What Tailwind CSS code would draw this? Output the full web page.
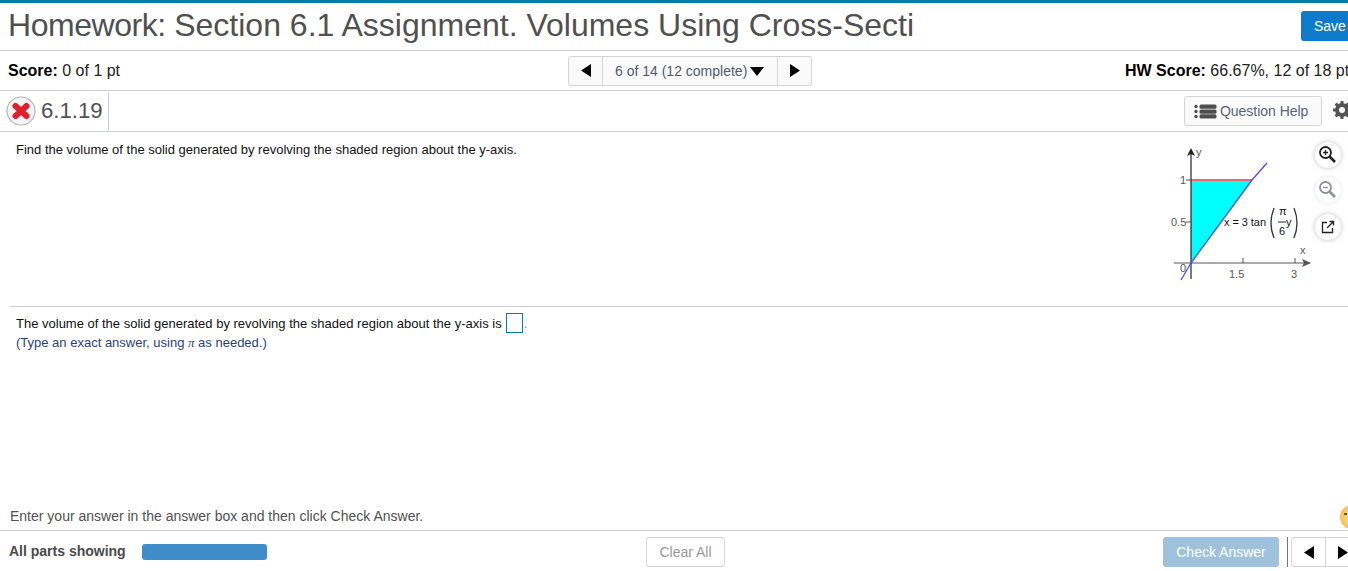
<!DOCTYPE html>
<html><head>
<meta charset="utf-8">
<script src="https://cdn.jsdelivr.net/npm/@tailwindcss/browser@4"></script>
<title>Homework</title>
</head>
<body class="bg-white overflow-hidden font-['Liberation_Sans',Arial,sans-serif]">
<div class="w-[1348px] h-[571px] overflow-hidden flex flex-col">
  <!-- title -->
  <div class="h-[51px] shrink-0 border-t-[3px] border-t-[#007fa3] border-b border-b-[#c8cfdf] flex items-start justify-between pl-2">
    <h1 class="text-[32px] leading-[44px] text-[#505050] whitespace-nowrap"><span class="tracking-[-0.45px]">Homework: </span>Section 6.1 Assignment. Volumes Using Cross-Secti</h1>
    <div class="w-[47px] h-[30px] mt-[8px] bg-[#0e7acb] rounded-l-[3px] text-white text-sm flex items-center pl-[13px] overflow-hidden">Save</div>
  </div>
  <!-- score row -->
  <div class="h-[40px] shrink-0 border-b border-b-[#c8cfdf] flex items-center pl-2 relative text-[14px] text-[#222]">
    <div class="w-[560px] shrink-0 text-[16px] whitespace-nowrap"><b class="text-black">Score:</b> 0 of 1 pt</div>
    <div class="w-[244px] h-[30px] shrink-0 flex items-center border border-[#d4d4d4] rounded-[3px] bg-[#fafafa] text-[#505a6e]">
      <div class="w-[34px] h-full flex items-center justify-center border-r border-[#d4d4d4]">
        <svg width="10" height="13" viewBox="0 0 10 13"><path d="M10 0V13L0 6.500Z" fill="#000"/></svg>
      </div>
      <div class="flex-1 h-full flex items-center pl-3 pt-[1px] whitespace-nowrap">6 of 14 (12 complete)<svg class="ml-[3px]" width="14" height="9" viewBox="0 0 14 9"><path d="M0 0H14L7 9Z" fill="#000"/></svg></div>
      <div class="w-[34px] h-full flex items-center justify-center border-l border-[#d4d4d4]">
        <svg width="10" height="13" viewBox="0 0 10 13"><path d="M0 0V13L10 6.500Z" fill="#000"/></svg>
      </div>
    </div>
    <div class="ml-[313px] shrink-0 text-[16px] whitespace-nowrap"><b class="text-black">HW Score:</b> 66.67%, 12 of 18 pts</div>
  </div>
  <!-- question number row -->
  <div class="h-[41px] shrink-0 border-b border-b-[#c8cfdf] flex items-center text-[#505050]">
    <div class="h-[39px] w-[109px] border-r border-[#c8cfdf] flex items-center pl-[6px] gap-[5px]">
      <svg width="30" height="30" viewBox="0 0 30 30">
        <circle cx="15" cy="15" r="14" fill="#f4f4f4" stroke="#b5b5b5" stroke-width="1.200"/>
        <path d="M9.500 10L20.500 20M20.500 10L9.500 20" stroke="#e0202c" stroke-width="6" stroke-linecap="round"/>
      </svg>
      <span class="text-[22.2px]">6.1.19</span>
    </div>
    <div class="ml-auto w-[138px] h-[30px] mr-[26px] border border-[#d4d4d4] rounded-[3px] bg-[#fafafa] flex items-center pl-[9px] gap-[3px] text-[14px] tracking-[-0.03px] text-[#5a6478] whitespace-nowrap">
      <svg width="23" height="15" viewBox="0 0 23 15" fill="#4d4d4d">
        <circle cx="2" cy="2.500" r="1.700"/><circle cx="2" cy="7.500" r="1.700"/><circle cx="2" cy="12.500" r="1.700"/>
        <rect x="5.500" y="0.500" width="17" height="4.300" rx="1.500"/><rect x="5.500" y="5.400" width="17" height="4.300" rx="1.500"/><rect x="5.500" y="10.300" width="17" height="4.300" rx="1.500"/>
      </svg>
      Question Help
    </div>
    <svg class="absolute left-[1333px] top-[101px]" width="18" height="18" viewBox="0 0 18 18">
      <circle cx="9" cy="9" r="5" fill="none" stroke="#555" stroke-width="4"/>
      <path d="M9 0V4M9 14V18M0 9H4M14 9H18M2.600 2.600L5.400 5.400M12.600 12.600L15.400 15.400M2.600 15.400L5.400 12.600M12.600 5.400L15.400 2.600" stroke="#555" stroke-width="3"/>
    </svg>
  </div>
  <!-- question -->
  <div class="h-[175px] shrink-0 ml-[10px] border-b border-b-[#c8cfdf] flex text-[13px] text-[#111]">
    <p class="ml-[6px] mt-[10px] w-[1140px] shrink-0 leading-[15px]">Find the volume of the solid generated by revolving the shaded region about the y-axis.</p>
    <svg class="mt-[10px] shrink-0 ml-[9px]" width="150" height="142" viewBox="1165 141 150 142">
      <path d="M1191 179H1252L1191 262Z" fill="#00ffff"/>
      <path d="M1191 179H1252" stroke="#f0666a" stroke-width="2"/>
      <path d="M1174 262H1310" stroke="#555" stroke-width="1.200"/>
      <path d="M1302 258L1311 262L1302 266L1304 262Z" fill="#555"/>
      <path d="M1191 278V150" stroke="#222" stroke-width="1.200"/>
      <path d="M1187 155L1191 147L1195 155L1191 153Z" fill="#222"/>
      <path d="M1186 179H1191M1186 221H1191M1243 257V262M1295 257V262" stroke="#555"/>
      <path d="M1181 279L1191 262L1252 179L1267 162" stroke="#4a4af0" stroke-width="1.300" fill="none"/>
      <g font-family="Liberation Sans" font-size="11" fill="#555">
        <text x="1196" y="155">y</text>
        <text x="1180" y="183">1</text>
        <text x="1171" y="225">0.5</text>
        <text x="1180" y="271">0</text>
        <text x="1229" y="277">1.5</text>
        <text x="1291" y="277">3</text>
        <text x="1300" y="253">x</text>
      </g>
      <g font-family="Liberation Sans" font-size="11" fill="#111">
        <text x="1224" y="225" font-weight="500" textLength="42">x = 3 tan</text>
        <text x="1279" y="214">π</text>
        <text x="1279" y="234">6</text>
        <text x="1286" y="225">y</text>
      </g>
      <path d="M1278 221H1286" stroke="#111" stroke-width="0.900"/>
      <path d="M1274 207Q1268 222 1274 237M1294 207Q1300 222 1294 237" stroke="#333" stroke-width="1.300" fill="none"/>
    </svg>
    <div class="mt-[10px] flex flex-col items-center gap-[9px] shrink-0 w-[26px]">
      <div class="w-[26px] h-[26px] rounded-full bg-white shadow-[0_0_5px_rgba(0,0,0,0.25)] flex items-center justify-center">
        <svg width="20" height="20" viewBox="0 0 20 20" fill="none" stroke="#222"><circle cx="7.500" cy="7.500" r="5.500" stroke-width="1.800"/><path d="M11.500 11.500L17 17" stroke-width="2.700"/><path d="M5 7.500H10M7.500 5V10" stroke-width="1.300"/></svg>
      </div>
      <div class="w-[26px] h-[26px] rounded-full bg-white shadow-[0_0_4px_rgba(0,0,0,0.12)] flex items-center justify-center">
        <svg width="20" height="20" viewBox="0 0 20 20" fill="none" stroke="#8a9299"><circle cx="7.500" cy="7.500" r="5.500" stroke-width="1.800"/><path d="M11.500 11.500L17 17" stroke-width="2.700"/><path d="M5 7.500H10" stroke-width="1.300"/></svg>
      </div>
      <div class="w-[26px] h-[26px] mt-[2px] rounded-full bg-white shadow-[0_0_5px_rgba(0,0,0,0.25)] flex items-center justify-center">
        <svg width="14" height="14" viewBox="0 0 14 14" fill="none" stroke="#222" stroke-width="1.300"><path d="M6 2.500H1.500V12.500H11.500V8"/><path d="M6 8L12.500 1.500M8.500 1.500H12.500V5.500"/></svg>
      </div>
    </div>
  </div>
  <!-- answer -->
  <div class="flex-1 relative px-4 pt-[6px] text-[13px] text-[#111] leading-[19px]">
    <div class="flex items-center whitespace-nowrap">The volume of the solid generated by revolving the shaded region about the y-axis is<span class="w-[17px] h-[20px] ml-[4px] mr-[1px] border border-[#007fa3] inline-block"></span><span class="text-[#888]">.</span></div>
    <div class="text-[#2a3f7a]">(Type an exact answer, using <span class="font-['Liberation_Serif',serif] italic">π</span> as needed.)</div>
  </div>
  <!-- instruction -->
  <div class="h-[31px] shrink-0 border-b border-b-[#c8cfdf] pl-[10px] pt-[7px] text-[14px] leading-[18px] text-[#505050] relative">
    Enter your answer in the answer box and then click Check Answer.
    <div class="absolute left-[1340px] top-[5px] w-[24px] h-[24px] rounded-full bg-radial from-[#fbe68a] to-[#eeb04a] flex items-center pl-[4px]"><span class="w-[3px] h-[2px] mb-[6px] bg-[#7a5a20]"></span></div>
  </div>
  <!-- footer -->
  <div class="h-[40px] shrink-0 flex items-center pl-[9px] text-[14px]">
    <b class="w-[133px] shrink-0 text-[#4a4a4a]">All parts showing</b>
    <div class="w-[125px] h-[16px] shrink-0 mt-[2px] rounded-[3px] bg-[#3f8ccb]"></div>
    <div class="ml-[379px] w-[79px] h-[30px] shrink-0 mt-[2px] border border-[#d4d4d4] rounded-[3px] text-[#999] flex items-center justify-center">Clear All</div>
    <div class="ml-[438px] w-[116px] h-[30px] shrink-0 mt-[2px] rounded-[3px] bg-[#9fc2dc] text-white flex items-center justify-center">Check Answer</div>
    <div class="ml-[8px] w-px h-[30px] shrink-0 mt-[2px] bg-[#777]"></div>
    <div class="ml-[3px] w-[60px] h-[30px] mt-[2px] border border-[#d4d4d4] rounded-[3px] flex shrink-0">
      <div class="w-[34px] flex items-center justify-center border-r border-[#d4d4d4]"><svg width="10" height="13" viewBox="0 0 10 13"><path d="M10 0V13L0 6.500Z" fill="#000"/></svg></div>
      <div class="flex-1 flex items-center pl-[12px]"><svg width="10" height="13" viewBox="0 0 10 13"><path d="M0 0V13L10 6.500Z" fill="#000"/></svg></div>
    </div>
  </div>
</div>
</body></html>
